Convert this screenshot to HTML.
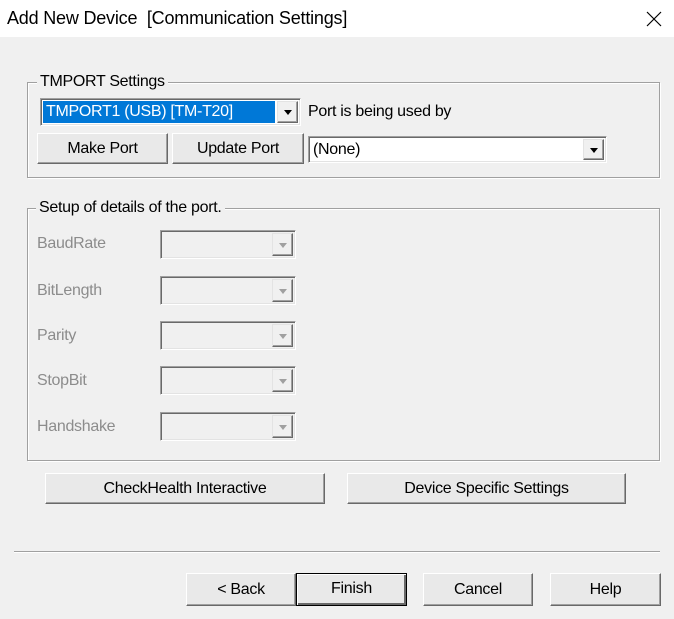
<!DOCTYPE html>
<html><head><style>
*{box-sizing:border-box;margin:0;padding:0}
body{width:674px;height:619px;background:#f0f0f0;font-family:"Liberation Sans",sans-serif;font-size:16px;color:#000;position:relative;overflow:hidden;letter-spacing:-0.3px}
.a{position:absolute}
.title{left:0;top:0;width:674px;height:37px;background:#fff}
.grp{border:1px solid #a0a0a0;box-shadow:1px 1px 0 #fff, inset 1px 1px 0 #fff}
.leg{background:#f0f0f0;padding:0 3px;line-height:16px}
.btn{background:#e9e9e9;border-top:1px solid #fff;border-left:1px solid #fff;border-right:1px solid #696969;border-bottom:1px solid #696969;box-shadow:inset -1px -1px 0 #a0a0a0;text-align:center}
.sunk{border-top:1px solid #a0a0a0;border-left:1px solid #a0a0a0;border-right:1px solid #fff;border-bottom:1px solid #fff;box-shadow:inset 1px 1px 0 #696969, inset -1px -1px 0 #e3e3e3}
.dd{position:absolute;right:2px;top:2px;bottom:2px;width:21px;background:#f0f0f0;border-top:1px solid #e3e3e3;border-left:1px solid #e3e3e3;border-right:1px solid #696969;border-bottom:1px solid #696969;box-shadow:inset -1px -1px 0 #a0a0a0}
.dd:after{content:"";position:absolute;left:6px;top:50%;margin-top:-2px;border-left:4px solid transparent;border-right:4px solid transparent;border-top:5px solid #000}
.dis .dd:after{border-top-color:#a0a0a0}
.lbl{color:#8c8c8c}
</style></head><body>
<div class="a title"></div>
<div class="a" style="left:7px;top:8px;font-size:18px;letter-spacing:-0.2px">Add New Device&nbsp; [Communication Settings]</div>
<svg class="a" style="left:646px;top:11px" width="16" height="16"><path d="M1 1L15 15M15 1L1 15" stroke="#000" stroke-width="1.2"/></svg>

<div class="a grp" style="left:27px;top:82px;width:633px;height:96px"></div>
<div class="a leg" style="left:37px;top:74px">TMPORT Settings</div>
<div class="a sunk" style="left:40px;top:98px;width:261px;height:28px;background:#fff">
 <div class="a" style="left:2px;top:2px;width:232px;height:22px;background:#0078d7;color:#fff;padding-left:3px;line-height:22px">TMPORT1 (USB) [TM-T20]</div>
 <div class="dd"></div></div>
<div class="a" style="left:308px;top:103px">Port is being used by</div>
<div class="a btn" style="left:37px;top:133px;width:131px;height:31px;line-height:29px">Make Port</div>
<div class="a btn" style="left:172px;top:133px;width:132px;height:31px;line-height:29px">Update Port</div>
<div class="a sunk" style="left:308px;top:136px;width:299px;height:27px;background:#fff">
 <div class="a" style="left:4px;top:4px;line-height:18px">(None)</div><div class="dd"></div></div>

<div class="a grp" style="left:27px;top:208px;width:633px;height:253px"></div>
<div class="a leg" style="left:36px;top:200px">Setup of details of the port.</div>
<div class="a lbl" style="left:37px;top:235px">BaudRate</div>
<div class="a lbl" style="left:37px;top:282px">BitLength</div>
<div class="a lbl" style="left:37px;top:327px">Parity</div>
<div class="a lbl" style="left:37px;top:372px">StopBit</div>
<div class="a lbl" style="left:37px;top:418px">Handshake</div>
<div class="a sunk dis" style="left:160px;top:230px;width:136px;height:29px"><div class="dd"></div></div>
<div class="a sunk dis" style="left:160px;top:276px;width:136px;height:29px"><div class="dd"></div></div>
<div class="a sunk dis" style="left:160px;top:321px;width:136px;height:29px"><div class="dd"></div></div>
<div class="a sunk dis" style="left:160px;top:366px;width:136px;height:29px"><div class="dd"></div></div>
<div class="a sunk dis" style="left:160px;top:412px;width:136px;height:29px"><div class="dd"></div></div>

<div class="a btn" style="left:45px;top:473px;width:280px;height:31px;line-height:29px">CheckHealth Interactive</div>
<div class="a btn" style="left:347px;top:473px;width:279px;height:31px;line-height:29px">Device Specific Settings</div>

<div class="a" style="left:14px;top:551px;width:646px;height:2px;border-top:1px solid #a0a0a0;border-bottom:1px solid #fff"></div>

<div class="a btn" style="left:186px;top:573px;width:110px;height:33px;line-height:31px">&lt; Back</div>
<div class="a btn" style="left:296px;top:573px;width:111px;height:33px;line-height:29px;border:1px solid #000;box-shadow:inset 1px 1px 0 #fff,inset -2px -2px 0 #696969">Finish</div>
<div class="a btn" style="left:423px;top:573px;width:110px;height:33px;line-height:31px">Cancel</div>
<div class="a btn" style="left:550px;top:573px;width:111px;height:33px;line-height:31px">Help</div>
</body></html>
